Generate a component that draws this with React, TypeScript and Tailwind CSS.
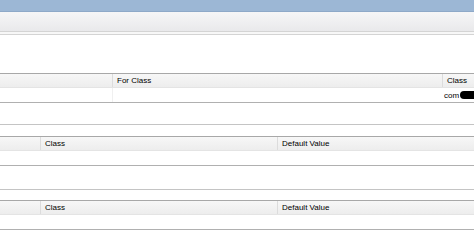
export default function App() {
  const font = { fontFamily: '"Liberation Sans", Arial, sans-serif' };
  return (
    <div className="w-[474px] h-[248px] bg-white overflow-hidden flex flex-col text-[8px] text-black" style={font}>
      {/* title strip */}
      <div className="h-[12px] shrink-0 bg-[#9cb7d5] border-b border-[#8ea9c8]" />
      <div className="h-[19px] shrink-0 bg-gradient-to-b from-[#f6f6f7] to-[#e9e9eb]" />
      <div className="h-[4px] shrink-0 border-t border-b border-[#d4d4d4] bg-[#f7f7f7]" />

      {/* first grid */}
      <div className="h-[38px] shrink-0" />
      <div className="flex flex-col border-t border-[#a8a8a8] border-b border-b-[#b0b0b0]">
        <div className="h-[14px] flex bg-gradient-to-b from-[#f7f7f7] to-[#ededed] border-b border-[#e4e4e4]">
          <div className="w-[113px] border-r border-[#dcdcdc]" />
          <div className="flex-1 border-r border-[#dcdcdc] pl-[4px] leading-[13px]">For Class</div>
          <div className="w-[31px] pl-[4px] leading-[13px]">Class</div>
        </div>
        <div className="h-[14px] flex">
          <div className="w-[113px] border-r border-[#f0f0f0]" />
          <div className="flex-1" />
          <div className="w-[31px] flex items-center pl-[1px]">
            <span className="leading-[13px]">com</span>
            <span className="ml-[1px] w-[18px] h-[8px] rounded-l-full bg-black" />
          </div>
        </div>
      </div>
      <div className="h-[22px] shrink-0 border-b border-[#c4c4c4]" />

      {/* second grid */}
      <div className="h-[11px] shrink-0" />
      <div className="flex flex-col border-t border-[#a8a8a8] border-b border-b-[#b0b0b0]">
        <div className="h-[14px] flex bg-gradient-to-b from-[#f7f7f7] to-[#ededed] border-b border-[#e4e4e4]">
          <div className="w-[41px] border-r border-[#dcdcdc]" />
          <div className="w-[237px] border-r border-[#dcdcdc] pl-[4px] leading-[13px]">Class</div>
          <div className="flex-1 pl-[4px] leading-[13px]">Default Value</div>
        </div>
        <div className="h-[14px]" />
      </div>
      <div className="h-[24px] shrink-0 border-b border-[#c4c4c4]" />

      {/* third grid */}
      <div className="h-[10px] shrink-0" />
      <div className="flex flex-col border-t border-[#a8a8a8] border-b border-b-[#b0b0b0]">
        <div className="h-[14px] flex bg-gradient-to-b from-[#f7f7f7] to-[#ededed] border-b border-[#e4e4e4]">
          <div className="w-[41px] border-r border-[#dcdcdc]" />
          <div className="w-[237px] border-r border-[#dcdcdc] pl-[4px] leading-[13px]">Class</div>
          <div className="flex-1 pl-[4px] leading-[13px]">Default Value</div>
        </div>
        <div className="h-[14px]" />
      </div>
    </div>
  );
}
